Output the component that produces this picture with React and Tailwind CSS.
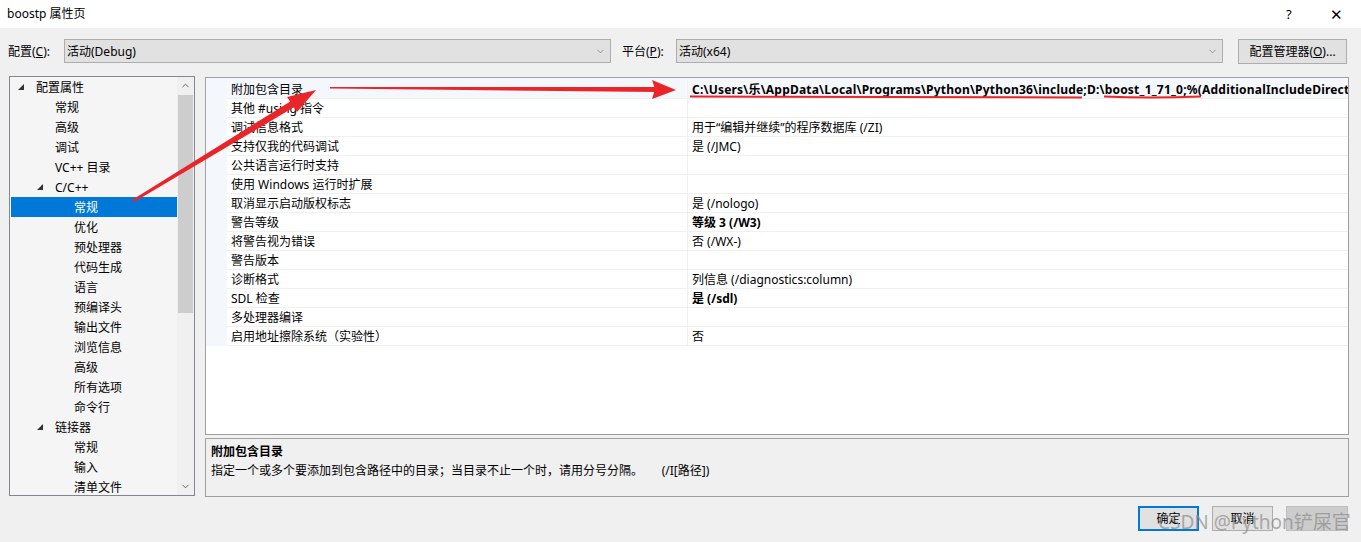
import React from "react";
import { ChevronDown, ChevronUp } from "lucide-react";

const tree = [
  { label: "配置属性", level: 0, open: true },
  { label: "常规", level: 1 },
  { label: "高级", level: 1 },
  { label: "调试", level: 1 },
  { label: "VC++ 目录", level: 1 },
  { label: "C/C++", level: 1, open: true },
  { label: "常规", level: 2, selected: true },
  { label: "优化", level: 2 },
  { label: "预处理器", level: 2 },
  { label: "代码生成", level: 2 },
  { label: "语言", level: 2 },
  { label: "预编译头", level: 2 },
  { label: "输出文件", level: 2 },
  { label: "浏览信息", level: 2 },
  { label: "高级", level: 2 },
  { label: "所有选项", level: 2 },
  { label: "命令行", level: 2 },
  { label: "链接器", level: 1, open: true },
  { label: "常规", level: 2 },
  { label: "输入", level: 2 },
  { label: "清单文件", level: 2 },
];

const props = [
  ["附加包含目录", "C:\\Users\\乐\\AppData\\Local\\Programs\\Python\\Python36\\include;D:\\boost_1_71_0;%(AdditionalIncludeDirectories)", true],
  ["其他 #using 指令", ""],
  ["调试信息格式", "用于“编辑并继续”的程序数据库 (/ZI)"],
  ["支持仅我的代码调试", "是 (/JMC)"],
  ["公共语言运行时支持", ""],
  ["使用 Windows 运行时扩展", ""],
  ["取消显示启动版权标志", "是 (/nologo)"],
  ["警告等级", "等级 3 (/W3)", true],
  ["将警告视为错误", "否 (/WX-)"],
  ["警告版本", ""],
  ["诊断格式", "列信息 (/diagnostics:column)"],
  ["SDL 检查", "是 (/sdl)", true],
  ["多处理器编译", ""],
  ["启用地址擦除系统（实验性）", "否"],
];

const indent = ["pl-[6px]", "pl-[25px]", "pl-[44px]"];

function Select({ value, className }) {
  return (
    <div className={`h-[24px] shrink-0 bg-[#e1e1e1] border border-[#adadad] flex items-center pl-[2px] pr-[4px] ${className}`}>
      <span className="flex-1 pt-px">{value}</span>
      <ChevronDown size={11} strokeWidth={1.3} className="text-[#606060]" />
    </div>
  );
}

function Arrows() {
  return (
    <svg className="absolute inset-0 pointer-events-none" width="1361" height="542">
      <polygon points="132,200 134,202 296,106 291,101" fill="#ea2529" />
      <polygon points="316,90 287,97 297,112" fill="#ea2529" />
      <polygon points="330,87 330,88.5 656,92 656,87" fill="#ea2529" />
      <polygon points="676,90 652,80 655,89 652,99" fill="#ea2529" />
      <path d="M690 96.5 L1082 97.5" stroke="#ea2529" strokeWidth="2" fill="none" />
      <path d="M1104 96.5 Q1150 98.5 1201 96.5" stroke="#ea2529" strokeWidth="2.2" fill="none" />
    </svg>
  );
}

export default function App() {
  return (
    <div className="relative w-[1361px] h-[542px] bg-[#f0f0f0] text-[12px] leading-[16px] text-black font-['Microsoft_YaHei_UI','Noto_Sans','Noto_Sans_CJK_SC',sans-serif] overflow-hidden flex flex-col">
      {/* title bar */}
      <div className="h-[28px] shrink-0 bg-white flex items-center pl-[7px] pr-[18px]">
        <span className="flex-1">boostp 属性页</span>
        <span className="w-[44px] text-[13px]">?</span>
        <span className="text-[15px]">✕</span>
      </div>

      {/* config bar */}
      <div className="h-[47px] shrink-0 flex items-center pl-[8px] pb-[1px]">
        <span className="w-[56px] shrink-0 pt-px">
          配置(<span className="underline">C</span>):
        </span>
        <Select value="活动(Debug)" className="w-[547px]" />
        <span className="w-[54px] shrink-0 pl-[11px] pt-px box-content">
          平台(<span className="underline">P</span>):
        </span>
        <Select value="活动(x64)" className="w-[547px]" />
        <button className="ml-[15px] shrink-0 h-[25px] w-[109px] bg-[#e1e1e1] border border-[#adadad] pt-px">
          配置管理器(<span className="underline">O</span>)...
        </button>
      </div>

      {/* main */}
      <div className="flex h-[422px] shrink-0 pt-px pl-[9px] pr-[12px]">
        <div className="w-[186px] shrink-0 h-[420px] border border-[#828790] bg-[#f5f5f5] flex">
          <div className="flex-1 flex flex-col overflow-hidden pl-px">
            {tree.map((t, i) => (
              <div
                key={i}
                className={`h-[20px] shrink-0 flex items-center ${indent[t.level]} ${t.selected ? "bg-[#0078d7] text-white" : ""}`}
              >
                <span className="w-[19px] flex items-center">
                  {t.open && (
                    <svg width="6" height="6" viewBox="0 0 6 6" className="ml-[1px]">
                      <polygon points="6,0 6,6 0,6" fill="#333" />
                    </svg>
                  )}
                </span>
                <span className="pt-px">{t.label}</span>
              </div>
            ))}
          </div>
          <div className="w-[17px] shrink-0 bg-[#f0f0f0] flex flex-col">
            <div className="h-[17px] flex items-center justify-center text-[#606060]">
              <ChevronUp size={11} strokeWidth={2} />
            </div>
            <div className="flex-1 px-px">
              <div className="h-[218px] mt-[1px] bg-[#cdcdcd]" />
            </div>
            <div className="h-[17px] flex items-center justify-center text-[#606060]">
              <ChevronDown size={11} strokeWidth={2} />
            </div>
          </div>
        </div>

        <div className="flex-1 min-w-0 ml-[10px] flex flex-col">
          <div className="h-[358px] mt-[1px] border border-[#a0a0a0] bg-white overflow-hidden">
            {props.map(([name, value, bold], i) => (
              <div key={i} className={`flex ${i === 0 ? "h-[21px] pt-[2px] bg-[#f4f7fc]" : "h-[19px]"}`}>
                <div className="w-[21px] shrink-0 bg-[#f4f7fc]" />
                <div className="w-[461px] shrink-0 pl-[4px] pt-px flex items-center border-b border-r border-[#f0f0f0] whitespace-nowrap">
                  {name}
                </div>
                <div className={`flex-1 min-w-0 pl-[4px] pt-px flex items-center border-b border-[#f0f0f0] whitespace-nowrap overflow-hidden ${bold ? "font-bold" : ""} ${i === 0 ? "tracking-[0.2px]" : ""}`}>
                  {value}
                </div>
              </div>
            ))}
          </div>
          <div className="h-[59px] mt-[3px] border border-[#a0a0a0] bg-[#f0f0f0] px-[5px] pt-[3px]">
            <div className="h-[19px] pt-px flex items-center font-bold">附加包含目录</div>
            <div className="h-[19px] pt-px flex items-center whitespace-pre">
              指定一个或多个要添加到包含路径中的目录；当目录不止一个时，请用分号分隔。      (/I[路径])
            </div>
          </div>
        </div>
      </div>

      {/* buttons */}
      <div className="flex-1 flex justify-end items-start pt-[9px] pr-[13px] gap-[13px]">
        <button className="w-[61px] h-[25px] bg-[#e1e1e1] border-2 border-[#0078d7]">确定</button>
        <button className="w-[61px] h-[25px] bg-[#e1e1e1] border border-[#adadad]">取消</button>
        <button className="w-[62px] h-[25px] bg-[#cccccc] border border-[#bfbfbf]" />
      </div>

      <div className="absolute left-[1158px] top-[510px] text-[19px] leading-[24px] text-[#8a8a8a]/70 whitespace-nowrap pointer-events-none">
        CSDN @Python铲屎官
      </div>

      <Arrows />
    </div>
  );
}
